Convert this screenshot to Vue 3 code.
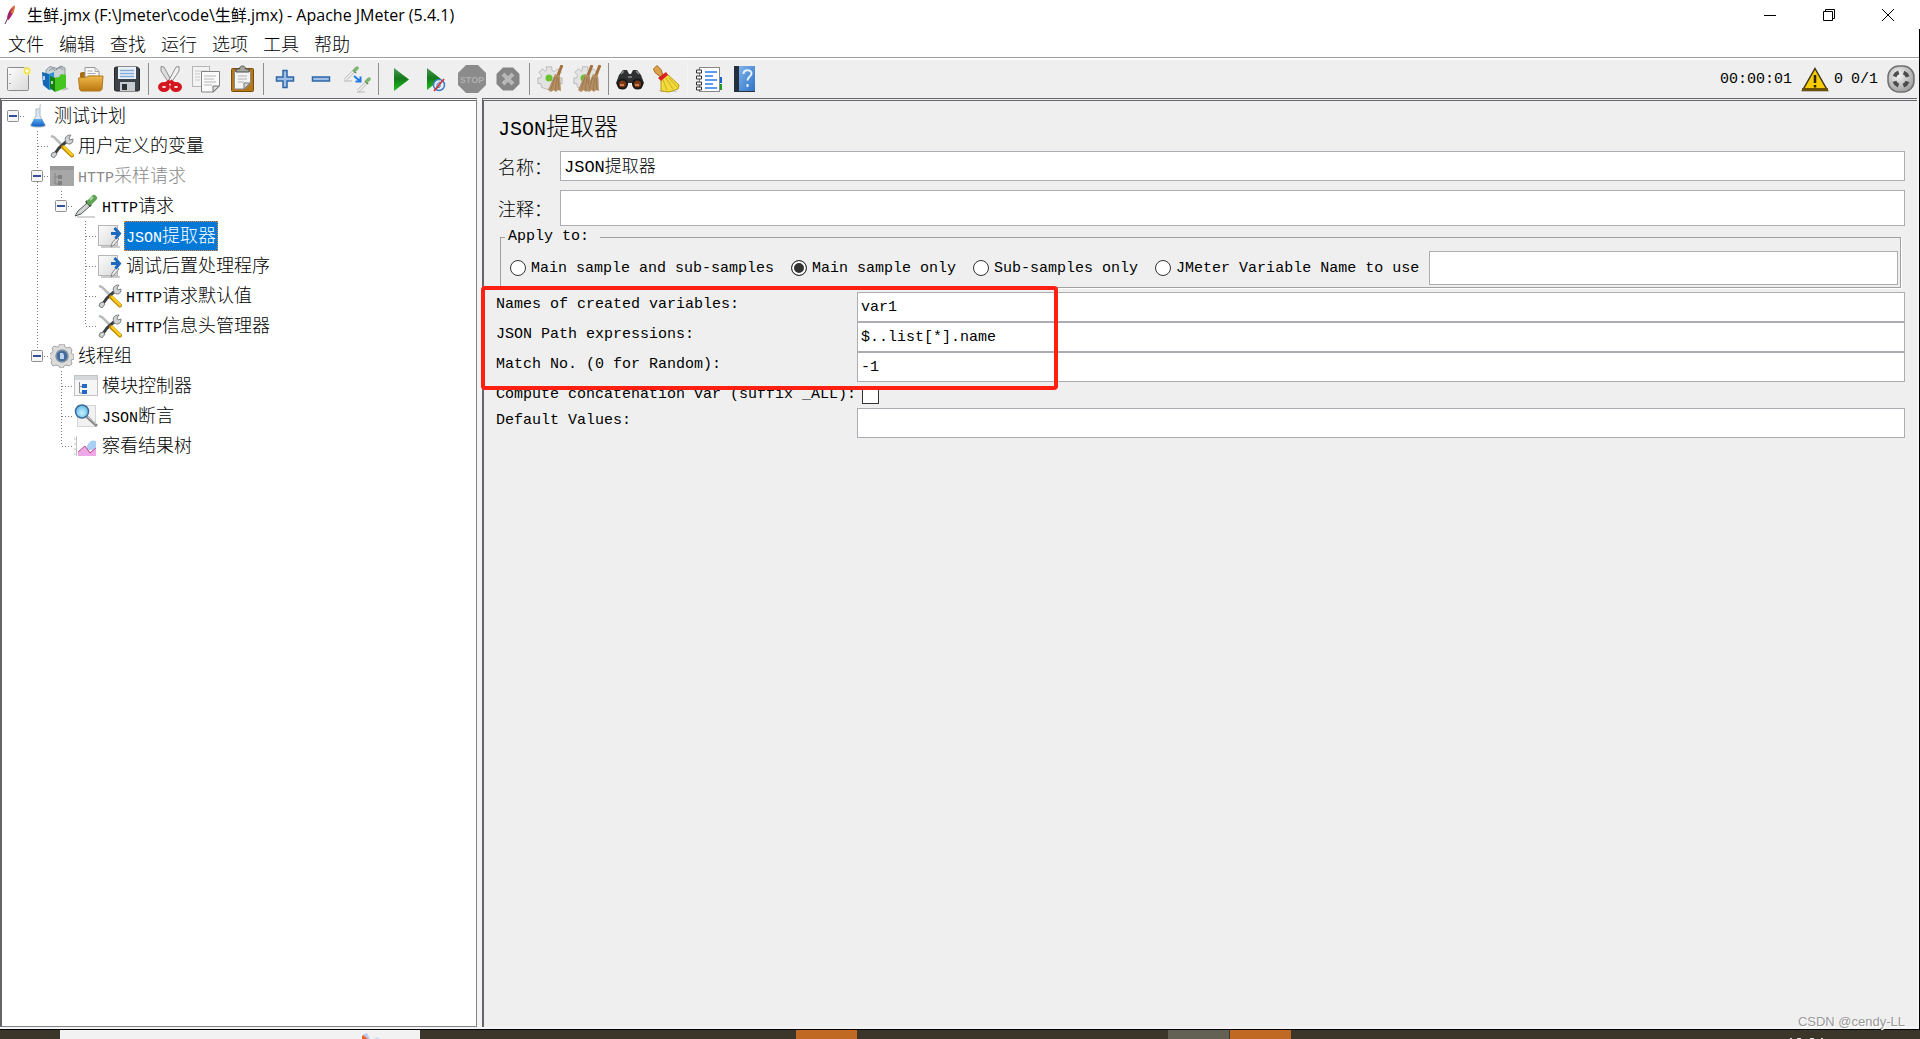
<template>
    <div class="desktop">
        <!-- shared icon shapes -->
        <svg class="sprite" aria-hidden="true">
            <defs>
                <linearGradient id="g-green" x1="0" y1="0" x2="0" y2="1">
                    <stop offset="0" stop-color="#4f9a55" /><stop offset=".45" stop-color="#147a1c" /><stop offset="1" stop-color="#1fc01b" />
                </linearGradient>
                <linearGradient id="g-folder" x1="0" y1="0" x2="0" y2="1">
                    <stop offset="0" stop-color="#f0b94a" /><stop offset="1" stop-color="#b87710" />
                </linearGradient>
                <linearGradient id="g-paper" x1="0" y1="0" x2="1" y2="1">
                    <stop offset="0" stop-color="#fdfdfd" /><stop offset="1" stop-color="#d9d9d9" />
                </linearGradient>
                <linearGradient id="g-book" x1="0" y1="0" x2="1" y2="1">
                    <stop offset="0" stop-color="#7fb2ea" /><stop offset="1" stop-color="#2f74c6" />
                </linearGradient>
                <linearGradient id="g-flask" x1="0" y1="0" x2="0" y2="1">
                    <stop offset="0" stop-color="#5da9ee" /><stop offset="1" stop-color="#0d5fc4" />
                </linearGradient>
                <radialGradient id="g-metal" cx=".4" cy=".35" r=".7">
                    <stop offset="0" stop-color="#f6f6f6" /><stop offset="1" stop-color="#9c9c9c" />
                </radialGradient>
                <radialGradient id="g-lens" cx=".5" cy=".6" r=".6">
                    <stop offset="0" stop-color="#c9f2ff" /><stop offset="1" stop-color="#5cb6e6" />
                </radialGradient>
            </defs>
            <symbol id="i-feather" viewBox="0 0 14 20">
                <path d="M1 19 3.500 13.500" stroke="#5b3566" stroke-width="1" />
                <path d="M3 14.500C3 9 6 3 10.500.500 11 4 9 10 4.500 15z" fill="#b1246b" />
                <path d="M6 6.500C7 4 8.500 1.500 10.500.500 11 3 10 6 8.500 9z" fill="#e97a20" />
                <path d="M4 12.500C5 9 7 5.500 9 3.500" stroke="#7b2a7d" fill="none" />
            </symbol>
            <symbol id="i-new" viewBox="0 0 28 28">
                <rect x="2.500" y="2.500" width="21" height="23" rx="1" fill="url(#g-paper)" stroke="#8b8b8b" />
                <path d="M5 9v1M5 18v1" stroke="#888" stroke-width="1.500" />
                <circle cx="22" cy="6" r="4.500" fill="#fbf3a6" opacity=".8" />
                <circle cx="22" cy="6" r="2.500" fill="#fffef0" stroke="#f0de4a" stroke-width="1.500" />
            </symbol>
            <symbol id="i-templates" viewBox="0 0 28 28">
                <path d="M5 5 9 1.500l7 2L20 1l4 2v10H5z" fill="#cbd2d6" stroke="#8a9499" />
                <path d="M8 6c2-3 5-3 6 0M15 5c2-3 6-3 7 0" fill="none" stroke="#7b858a" />
                <path d="M1 7 8 9v16l-6-5z" fill="#1467b4" /><path d="M8 9 13 7v17l-5 1z" fill="#2c92d8" />
                <path d="M9 11 14 13v14l-5-4z" fill="#14800f" />
                <path d="M14 13l4-1 2-3 5 1v13l-11 4z" fill="#45c51f" />
                <path d="M3 11v4M11 16v3" stroke="#eef" stroke-width="1.500" /><path d="M25 22l3 2-7 2z" fill="#bbb" />
            </symbol>
            <symbol id="i-open" viewBox="0 0 28 28">
                <path d="M3 25V8l2-1h6v5h13v13z" fill="#a96c10" />
                <path d="M8 14V2.500h10l4 4V14z" fill="#f8f8f8" stroke="#999" />
                <path d="M18 2.500v4h4M10.500 6h5M10.500 8.500h8M10.500 11h8" fill="none" stroke="#aaa" />
                <path d="M1.500 13 10 12l2-1h14l-1 13.500-2 1.500H4L2.500 24z" fill="url(#g-folder)" stroke="#b47a1c" />
            </symbol>
            <symbol id="i-save" viewBox="0 0 28 28">
                <path d="M1.500 3 2.500 2h22l2 2v21l-1 1h-23l-1-1z" fill="#3d4248" stroke="#24272b" />
                <rect x="5" y="2" width="18" height="12" fill="#e9f2fb" />
                <path d="M7 5.500h14M7 8.500h14M7 11.500h14" stroke="#86acd6" stroke-width="1.500" />
                <rect x="7" y="17" width="15" height="9" fill="#c8ccd0" /><rect x="9" y="19" width="5" height="6" fill="#2e3237" />
            </symbol>
            <symbol id="i-cut" viewBox="0 0 28 28">
                <path d="M5 1.500 8 2l8 15-3 1L5 6z" fill="#dedede" stroke="#8e8e8e" />
                <path d="M23 1.500 20 2l-8 15 3 1 8-12z" fill="#f1f1f1" stroke="#8e8e8e" />
                <path d="M14 16 10 19M14 16l4 3" stroke="#d5151d" stroke-width="4" fill="none" />
                <ellipse cx="8" cy="22" rx="4" ry="3" fill="#eee" stroke="#d5151d" stroke-width="4" />
                <ellipse cx="20" cy="22" rx="4" ry="3" fill="#eee" stroke="#d5151d" stroke-width="4" />
            </symbol>
            <symbol id="i-copy" viewBox="0 0 28 28">
                <rect x=".500" y="1.500" width="17" height="20" fill="#f3f3f3" stroke="#b5b5b5" />
                <path d="M3 6h12M3 9h5M3 12h5M3 15h5" stroke="#ccc" />
                <path d="M9.500 6.500h18V21l-6 6h-12z" fill="#fafafa" stroke="#858585" />
                <path d="M12 11h12M12 14h10M12 17h12M12 20h8" stroke="#b4b4b4" /><path d="M21 27v-6h6z" fill="#ddd" stroke="#777" />
            </symbol>
            <symbol id="i-paste" viewBox="0 0 28 28">
                <rect x="3.500" y="3.500" width="22" height="23" rx="1" fill="#b57718" stroke="#7b4d08" />
                <path d="M6.500 6.500h16v12l-6 5.500h-10z" fill="#f4f4f4" stroke="#8b8b8b" />
                <path d="M10 11h9M10 14h9M10 17h6" stroke="#b2b2b2" /><path d="M16 24v-6h6z" fill="#d6d6d6" stroke="#777" />
                <path d="M8 7V4h3.500c0-4 6-4 6 0H21v3z" fill="#a4a69f" stroke="#4f514d" />
            </symbol>
            <symbol id="i-plus" viewBox="0 0 28 28">
                <path d="M12 5.500h4V12h6.500v4H16v6.500h-4V16H5.500v-4H12z" fill="#9fc0e6" stroke="#2f66a8" stroke-width="1.500" />
            </symbol>
            <symbol id="i-minus" viewBox="0 0 28 28">
                <rect x="5.500" y="12" width="17" height="4" fill="#9fc0e6" stroke="#2f66a8" stroke-width="1.500" />
            </symbol>
            <symbol id="i-toggle" viewBox="0 0 28 28">
                <path d="M1 16h8M14 27h8" stroke="#d2d2d2" stroke-width="2" />
                <path d="M2 15 11 6M15 26 24 17" stroke="#b2b2b2" stroke-width="3" /><path d="M2 15 11 6M15 26 24 17" stroke="#f7f7f7" stroke-width="1.500" />
                <path d="M10 5l3 3M22 16l3 3" stroke="#5b7d55" stroke-width="1.500" />
                <path d="M12 5 14 3M24 16 26 14" stroke="#7cb56f" stroke-width="3.500" stroke-linecap="round" />
                <path d="M11 11l6 5M17.500 11.500v5h-5" fill="none" stroke="#1f79ea" stroke-width="2" />
            </symbol>
            <symbol id="i-play" viewBox="0 0 28 28"><path d="M8 3 23 14.500 8 26z" fill="url(#g-green)" /></symbol>
            <symbol id="i-play-now" viewBox="0 0 28 28">
                <path d="M5 3 19 14 5 25z" fill="url(#g-green)" />
                <circle cx="17" cy="20" r="5.500" fill="#e9eef8" stroke="#3f7cc4" stroke-width="1.500" />
                <path d="M15 23v-4l3-2v5z" fill="none" stroke="#3f7cc4" /><path d="M12 26 22 14" stroke="#dc2a2a" stroke-width="1.500" />
            </symbol>
            <symbol id="i-stop" viewBox="0 0 28 28"><path d="M8 0h12l8 8v12l-8 8H8l-8-8V8z" fill="#8b8b8b" /></symbol>
            <symbol id="i-shutdown" viewBox="0 0 28 28">
                <path d="M9 2.500h10l6.500 6.500v10L19 25.500H9L2.500 19V9z" fill="#858585" />
                <path d="M9 9l10 10M19 9 9 19" stroke="#b8b8b8" stroke-width="4" />
            </symbol>
            <symbol id="i-gear" viewBox="0 0 28 28">
                <path d="M10 2h6v4l3 1 3-3 4 4-3 3 1 3h3v6h-3l-2 4-4 2h-8l-5-2-1-4H1v-6h3l1-3-3-3 4-4 3 3 1-1z" fill="#e3e3e3" stroke="#b5b5b5" />
            </symbol>
            <symbol id="i-broom-s" viewBox="0 0 16 28">
                <path d="M15 0 10 13" stroke="#a5713b" stroke-width="3" />
                <path d="M8 9l5 2 1 15-3-1-2 2-2-2-3 2-3-2C3 21 5 15 8 9z" fill="#b58f64" />
                <path d="M8 12 4 24M10 12l-2 14M11 13l1 12" stroke="#9b784f" fill="none" />
            </symbol>
            <symbol id="i-clear" viewBox="0 0 28 28">
                <use href="#i-gear" x="0" width="26" height="26" /><circle cx="12" cy="13" r="3.500" fill="#67c32e" />
                <use href="#i-broom-s" x="10" y="0" width="16" height="28" />
            </symbol>
            <symbol id="i-clear-all" viewBox="0 0 28 28">
                <use href="#i-gear" width="26" height="26" /><circle cx="11" cy="13" r="3.500" fill="#67c32e" />
                <use href="#i-broom-s" x="4" y="0" width="16" height="28" /><use href="#i-broom-s" x="12" y="0" width="16" height="28" />
            </symbol>
            <symbol id="i-search" viewBox="0 0 28 28">
                <path d="M3 10 7 5h4l2 4h2l2-4h4l4 5 3 8-3 6h-6l-3-6h-4l-3 6H3l-3-6z" fill="#2f3031" />
                <path d="M5 9 8 6M20 6l3 3M12 12h4" stroke="#8a8a8a" stroke-width="1.500" />
                <circle cx="6.500" cy="19" r="4.500" fill="#7b3a16" stroke="#191919" stroke-width="2" /><circle cx="21.500" cy="19" r="4.500" fill="#7b3a16" stroke="#191919" stroke-width="2" />
                <path d="M4 20h4M19 20h4" stroke="#cf8050" stroke-width="2" />
            </symbol>
            <symbol id="i-reset" viewBox="0 0 28 28">
                <path d="M6 25h16l4 2H9z" fill="#ccc" />
                <path d="M1.500 4 5 .500l4 4 2 6-3 1-5-4z" fill="#dca24a" stroke="#a56b1d" />
                <path d="M9 13 15 9l12 11-1 4-9 3-8-1z" fill="#f1db3c" stroke="#b89a16" />
                <path d="M11 15l4 10M14 13l7 11M17 13l8 9" stroke="#cfae20" fill="none" />
                <path d="M6 13 14 7l2 3-7 6z" fill="#d92222" />
            </symbol>
            <symbol id="i-function" viewBox="0 0 28 28">
                <path d="M24 12h3v6h-3z" fill="#1263d8" /><path d="M24 19h3v6h-3z" fill="#1c9a22" />
                <rect x="4.500" y="2.500" width="20" height="24" fill="#fff" stroke="#888" />
                <path d="M10 7h12M10 11h8M10 15h12M10 19h8M10 23h12" stroke="#2a7cf0" stroke-width="1.500" />
                <path d="M1.500 5h5v3h-5zM1.500 11h5v3h-5zM1.500 17h5v3h-5zM1.500 22h5v3h-5z" fill="#fff" stroke="#333" />
            </symbol>
            <symbol id="i-help" viewBox="0 0 28 28">
                <rect x="3" y="1" width="21" height="26" fill="#26303c" /><rect x="8" y="1" width="16" height="25" fill="url(#g-book)" />
                <path d="M12.500 9c0-5 8-5 8-.500 0 3-4 3-4 7M16.500 19v3" fill="none" stroke="#e6f3ff" stroke-width="2" />
            </symbol>
            <symbol id="i-warning" viewBox="0 0 28 28">
                <path d="M14 3.500 26.500 25.500H1.500z" fill="#f7cb07" stroke="#3d3516" stroke-width="1.500" /><path d="M1 24.500h26" stroke="#6c5200" stroke-width="3" />
                <path d="M14 10v8M14 20v2.500" stroke="#2b2500" stroke-width="2.500" />
            </symbol>
            <symbol id="i-status" viewBox="0 0 28 28">
                <rect x="1" y="1" width="26" height="26" rx="11" fill="url(#g-metal)" stroke="#707070" stroke-width="1.500" />
                <circle cx="14" cy="14" r="7" fill="none" stroke="#4c4c4c" stroke-width="4" stroke-dasharray="6 4.995" stroke-dashoffset="-2.500" />
            </symbol>
            <symbol id="i-flask" viewBox="0 0 24 24">
                <ellipse cx="12" cy="21.500" rx="8" ry="2" fill="#bbb" />
                <path d="M10 5h4v7l5 9c0 2-14 2-14 0l5-9z" fill="#dbe9f5" stroke="#a9b8c5" />
                <path d="M8 15h8l3 6c0 2-14 2-14 0z" fill="url(#g-flask)" /><path d="M14.500 0 13 9" stroke="#c8d0d6" stroke-width="1.500" />
            </symbol>
            <symbol id="i-tools" viewBox="0 0 24 24">
                <path d="M1 2l3 1 8 8" fill="none" stroke="#b9bcbd" stroke-width="2.500" />
                <path d="M4 21 9 14 17 7" fill="none" stroke="#3e4142" stroke-width="3" />
                <path d="M1 22l1-3 3-1 2 2-3 4zM16 8c-2-4 0-7 5-7l-2 3 1 2 3-1c0 5-3 6-7 4z" fill="#d0d2d3" stroke="#7d8081" />
                <path d="M13 13 22 21.500" stroke="#b98303" stroke-width="4" stroke-linecap="round" /><path d="M14 13 22 21" stroke="#fac91c" stroke-width="2.500" stroke-linecap="round" />
            </symbol>
            <symbol id="i-ctrl-off" viewBox="0 0 24 24">
                <path d="M0 2h24v20H0z" fill="#a7a7a7" /><path d="M0 2h24v4H0z" fill="#989898" />
                <path d="M5 9v11h5M5 13h4" fill="none" stroke="#858585" /><path d="M8 11h4v4H8zM8 17h4v4H8z" fill="#808080" />
            </symbol>
            <symbol id="i-pipette" viewBox="0 0 24 24">
                <path d="M3 23h18" stroke="#d4d4d4" stroke-width="2" />
                <path d="M1 22 4 17l9-8 3 3-9 8z" fill="#d3d5d5" stroke="#555959" />
                <path d="M12 7l5 5" stroke="#36513a" stroke-width="2.500" />
                <path d="M16 8l4-4" stroke="#5ea454" stroke-width="6" stroke-linecap="round" /><path d="M16 6l3-3" stroke="#a8d89d" stroke-width="2" />
            </symbol>
            <symbol id="i-post" viewBox="0 0 24 24">
                <path d="M3 23h19" stroke="#ccc" stroke-width="2" /><rect x=".500" y="1.500" width="19" height="20" fill="url(#g-paper)" stroke="#b5b5b5" />
                <path d="M13 23l1-4 5-6 2 2-5 6z" fill="#eee" stroke="#888" />
                <path d="M13 9.500h9M16.500 4l5 5.500-4 5" fill="none" stroke="#1e69bd" stroke-width="3" />
            </symbol>
            <symbol id="i-thread" viewBox="0 0 24 24">
                <path d="M10 0h4l1 3 2 1 3-1 2 3-1 3 3 2v4l-3 1 1 4-3 2-3-1-2 1-1 2h-3l-1-2-3-1-3 1-2-3 1-3-1-1-2-2v-3l3-1 1-2-1-3 2-2 3 1 2-1z" fill="#dcdcdc" stroke="#a5a5a5" />
                <circle cx="12" cy="12" r="6" fill="#426b9f" stroke="#84919f" stroke-width="1.500" /><path d="M10 9h3l1 2v4h-4z" fill="#bdd3ea" />
            </symbol>
            <symbol id="i-module" viewBox="0 0 24 24">
                <rect x=".500" y="1.500" width="23" height="20" fill="#f5f5f5" stroke="#c3c3c3" /><path d="M1 2h22v4H1z" fill="#d5d8da" />
                <path d="M5.500 8v11h4M5.500 12.500h4" fill="none" stroke="#8d8d8d" /><path d="M8 10h5v4H8zM8 16h5v4H8z" fill="#2268c4" />
            </symbol>
            <symbol id="i-assert" viewBox="0 0 24 24">
                <rect x="3.500" y="1.500" width="18" height="21" fill="#f1f1f1" stroke="#d4d4d4" />
                <path d="M13 13l10 9" stroke="#888" stroke-width="3" /><path d="M14 13l8 7" stroke="#d2d2d2" />
                <circle cx="8" cy="7.500" r="6.500" fill="url(#g-lens)" stroke="#3b6b98" stroke-width="1.500" />
            </symbol>
            <symbol id="i-results" viewBox="0 0 24 24">
                <path d="M2.500 2v20M0 5h2M0 10h2M0 15h2M0 20h2" stroke="#c2c2c2" />
                <path d="M13 12c3-6 6-6 9-5v9H13z" fill="#a9cff5" />
                <path d="M4 22v-4l7-6 5 6 6-4v8z" fill="#eda8e8" /><path d="M4 18l7-6 5 7 6-5" fill="none" stroke="#c94b83" />
            </symbol>
        </svg>

        <div class="window">
            <header class="title-bar">
                <svg class="feather"><use href="#i-feather" /></svg>
                <span class="title">生鲜.jmx (F:\Jmeter\code\生鲜.jmx) - Apache JMeter (5.4.1)</span>
                <button class="win-btn" aria-label="最小化"><svg viewBox="0 0 12 12"><path d="M0 6.500h12" /></svg></button>
                <button class="win-btn" aria-label="还原"><svg viewBox="0 0 12 12"><path d="M.500 2.500h9v9h-9zM2.500 2V.500h9v9H10" /></svg></button>
                <button class="win-btn" aria-label="关闭"><svg viewBox="0 0 12 12"><path d="M0 0l12 12M12 0 0 12" /></svg></button>
            </header>

            <div class="frame">
                <nav class="menu-bar">
                    <button v-for="m in menus" :key="m">{{ m }}</button>
                </nav>

                <div class="tool-bar">
                    <div class="tool-group" v-for="(group, gi) in tools" :key="gi">
                        <button v-for="t in group" :key="t.icon" :aria-label="t.label">
                            <svg>
                                <use :href="'#i-' + t.icon" />
                                <text v-if="t.text" class="icon-text" x="14" y="18" text-anchor="middle">{{ t.text }}</text>
                            </svg>
                        </button>
                    </div>
                    <div class="status">
                        <span class="timer">00:00:01</span>
                        <svg><use href="#i-warning" /></svg>
                        <span class="errors">0</span>
                        <span class="threads">0/1</span>
                        <svg><use href="#i-status" /></svg>
                    </div>
                </div>

                <div class="panes">
                    <aside class="tree-pane">
                        <ul class="tree">
                            <li v-for="n in nodes" :key="n.label">
                                <svg v-for="(g, i) in n.guides" :key="i" class="guide" viewBox="0 0 24 30">
                                    <path class="dots" :d="guidePath[g]" />
                                    <g v-if="n.open && i === n.guides.length - 1">
                                        <path class="dots" d="M18 15.500h6" />
                                        <rect x="5.500" y="9.500" width="11" height="11" rx="1" fill="#f7f7f7" stroke="#8f8f8f" />
                                        <path d="M7 15h8" stroke="#33509f" stroke-width="2" />
                                    </g>
                                </svg>
                                <svg class="node-icon"><use :href="'#i-' + n.icon" /></svg>
                                <span class="node-label" :class="{ selected: n.label === current, off: n.off }"><span
                                    class="latin" v-if="n.latin">{{ n.latin }}</span>{{ n.label.slice(n.latin ? n.latin.length : 0) }}</span>
                            </li>
                        </ul>
                    </aside>

                    <main class="editor">
                        <h1><span class="latin">JSON</span>提取器</h1>
                        <div class="field">
                            <label for="name">名称：</label>
                            <input id="name" class="cjk-input" type="text" v-model="form.name">
                        </div>
                        <div class="field tall">
                            <label for="comment">注释：</label>
                            <input id="comment" class="cjk-input" type="text" v-model="form.comment">
                        </div>

                        <fieldset>
                            <legend>Apply to:</legend>
                            <div class="scope">
                                <label v-for="s in scopes" :key="s">
                                    <input type="radio" name="scope" :value="s" v-model="form.scope">{{ s }}
                                </label>
                                <input type="text" aria-label="JMeter Variable Name" v-model="form.scopeVariable">
                            </div>
                        </fieldset>

                        <div class="params">
                            <div class="param" v-for="p in params" :key="p.id">
                                <label :for="p.id">{{ p.label }}</label>
                                <input :id="p.id" type="text" v-model="form[p.id]">
                            </div>
                            <div class="param compact">
                                <label for="concat">Compute concatenation var (suffix _ALL):</label>
                                <input id="concat" type="checkbox" v-model="form.concat">
                            </div>
                            <div class="param">
                                <label for="defaults">Default Values:</label>
                                <input id="defaults" type="text" v-model="form.defaults">
                            </div>
                            <div class="highlight"></div>
                        </div>
                        <span class="watermark">CSDN @cendy-LL</span>
                    </main>
                </div>
            </div>
        </div>

        <footer class="task-bar">
            <div class="task-search">
                <svg viewBox="0 0 24 9"><path d="M1 9V6l3-2 4 5z" fill="#e9622a" /><path d="M2 5l4-2 3 6H7z" fill="#b9cdf3" /><path d="M13 9l3-2 3 2z" fill="#c7dcf5" /></svg>
            </div>
            <div class="task orange first"></div>
            <div class="task grey"></div>
            <div class="task orange"></div>
            <svg class="clock" viewBox="0 0 40 9"><path d="M2 8.500h2M9 8.500h4M22 8.500h4M33 8.500h2" stroke="#ddd" /></svg>
        </footer>
    </div>
</template>

<script setup>
import { reactive, ref } from 'vue'

const menus = ['文件', '编辑', '查找', '运行', '选项', '工具', '帮助']

const tools = [
    [
        { icon: 'new', label: '新建' },
        { icon: 'templates', label: '模板' },
        { icon: 'open', label: '打开' },
        { icon: 'save', label: '保存' },
    ],
    [
        { icon: 'cut', label: '剪切' },
        { icon: 'copy', label: '复制' },
        { icon: 'paste', label: '粘贴' },
    ],
    [
        { icon: 'plus', label: '展开' },
        { icon: 'minus', label: '折叠' },
        { icon: 'toggle', label: '切换' },
    ],
    [
        { icon: 'play', label: '启动' },
        { icon: 'play-now', label: '不停顿开始' },
        { icon: 'stop', label: '停止', text: 'STOP' },
        { icon: 'shutdown', label: '关闭' },
    ],
    [
        { icon: 'clear', label: '清除' },
        { icon: 'clear-all', label: '清除全部' },
    ],
    [
        { icon: 'search', label: '查找' },
        { icon: 'reset', label: '重置搜索' },
    ],
    [
        { icon: 'function', label: '函数助手' },
        { icon: 'help', label: '帮助' },
    ],
]

// one cell per level: blank, line, tee, end
const guidePath = {
    b: '',
    l: 'M11.5 0v30',
    t: 'M11.5 0v30M12 15.5h12',
    e: 'M11.5 0v15M12 15.5h12',
}

const nodes = [
    { label: '测试计划', icon: 'flask', guides: 'b', open: true },
    { label: '用户定义的变量', icon: 'tools', guides: 'bt' },
    { label: 'HTTP采样请求', latin: 'HTTP', icon: 'ctrl-off', guides: 'bt', open: true, off: true },
    { label: 'HTTP请求', latin: 'HTTP', icon: 'pipette', guides: 'ble', open: true },
    { label: 'JSON提取器', latin: 'JSON', icon: 'post', guides: 'blbt' },
    { label: '调试后置处理程序', icon: 'post', guides: 'blbt' },
    { label: 'HTTP请求默认值', latin: 'HTTP', icon: 'tools', guides: 'blbt' },
    { label: 'HTTP信息头管理器', latin: 'HTTP', icon: 'tools', guides: 'blbe' },
    { label: '线程组', icon: 'thread', guides: 'be', open: true },
    { label: '模块控制器', icon: 'module', guides: 'bbt' },
    { label: 'JSON断言', latin: 'JSON', icon: 'assert', guides: 'bbt' },
    { label: '察看结果树', icon: 'results', guides: 'bbe' },
]
const current = ref('JSON提取器')

const scopes = ['Main sample and sub-samples', 'Main sample only', 'Sub-samples only', 'JMeter Variable Name to use']

const params = [
    { id: 'variables', label: 'Names of created variables:' },
    { id: 'paths', label: 'JSON Path expressions:' },
    { id: 'matchNo', label: 'Match No. (0 for Random):' },
]

const form = reactive({
    name: 'JSON提取器',
    comment: '',
    scope: 'Main sample only',
    scopeVariable: '',
    variables: 'var1',
    paths: '$..list[*].name',
    matchNo: '-1',
    concat: false,
    defaults: '',
})
</script>

<style>
body {margin: 0; overflow: hidden;}
</style>

<style scoped>
.desktop {
    display: flex; flex-direction: column; height: 100vh; color: #000; background-color: #fff;
    font-family: "Liberation Mono", "Noto Sans CJK SC", monospace; font-size: 15px;
}
.sprite {position: absolute; width: 0; height: 0;}
button {border: 0; padding: 0; background: none; color: inherit; font: inherit;}
svg {display: block;}

.window {flex: 1; min-height: 0; display: flex; flex-direction: column; border-bottom: 1px solid #000;}
.title-bar {display: flex; align-items: center; height: 29px; padding: 0 3px 0 4px;}
.feather {width: 14px; height: 20px;}
.title {flex: 1; padding-left: 9px; font-family: "Open Sans", "Noto Sans CJK SC", sans-serif; font-size: 16px; line-height: 24px;}
.win-btn {display: flex; justify-content: center; width: 59px;}
.win-btn svg {width: 12px; height: 12px; fill: none; stroke: #000; stroke-width: 1;}

.frame {flex: 1; min-height: 0; display: flex; flex-direction: column; border-right: 1px solid #000;}
.menu-bar {display: flex; gap: 15px; height: 28px; padding-left: 8px; border-bottom: 1px solid #a0a0a0;}
.menu-bar button {font-family: "Noto Sans CJK SC", sans-serif; font-size: 18px; line-height: 26px; font-weight: 300;}

.tool-bar {display: flex; align-items: center; height: 38px; padding-left: 1px; border-top: 2px solid #fff; background-color: #efefef;}
.tool-group {display: flex;}
.tool-group + .tool-group {margin-left: 3px; padding-left: 3px; border-left: 1px solid #8e8e8e;}
.tool-group:nth-child(7) {border-left-color: #f5f5f5;}
.tool-group button {display: flex; justify-content: center; align-items: center; width: 36px; height: 32px;}
.tool-bar svg {width: 28px; height: 28px;}
.icon-text {font-family: "Liberation Sans", sans-serif; font-size: 9px; font-weight: bold; fill: #b0b0b0;}
.status {display: flex; align-items: center; margin-left: auto; padding-right: 4px;}
.timer, .threads {margin-right: 9px;}
.errors {margin: 0 8px 0 5px;}

.panes {flex: 1; min-height: 0; display: flex; gap: 5px; padding: 0 2px 2px 0; background-color: #f4f4f4;}
.tree-pane {
    flex: 0 1 477px; box-sizing: border-box; background-color: #fff;
    border: 1px solid #828287; border-top: 3px double #65656a; border-left: 2px solid #65656a;
}
.tree {list-style: none; margin: 0; padding: 0;}
.tree li {display: flex; align-items: center; height: 30px;}
.guide {flex: none; width: 24px; height: 30px;}
.dots {fill: none; stroke: #7d7d7d; stroke-dasharray: 1 2;}
.node-icon {flex: none; width: 24px; height: 24px;}
.node-label {
    margin-left: 2px; padding: 0 1px 4px; font-family: "Noto Sans CJK SC", sans-serif; font-size: 18px; font-weight: 300;
    line-height: 24px; white-space: nowrap; border: 1px solid transparent;
}
.latin {font-family: "Liberation Mono", monospace; font-size: 15px; line-height: 1;}
.node-label.off {color: #8a8a8a;}
.node-label.selected {color: #fff; background-color: #0078d7; border: 1px dotted #ff8728;}

.editor {
    flex: 1; min-width: 0; position: relative; padding: 4px 12px 0; background-color: #efefef;
    border-top: 3px double #65656a; border-left: 2px solid #65656a;
}
h1 {margin: 0 0 6px 2px; font-family: "Noto Sans CJK SC", sans-serif; font-size: 24px; font-weight: 300; line-height: 40px;}
h1 .latin {font-size: 20px;}
input[type=text] {
    box-sizing: border-box; min-width: 0; height: 30px; padding: 0 3px; border: 1px solid #abadb3; border-radius: 0;
    background-color: #fff; color: #000; font: inherit; outline: none;
}
.field {display: flex; align-items: center; margin-bottom: 9px;}
.field label {width: 64px; padding-left: 2px; box-sizing: border-box; font-family: "Noto Sans CJK SC", sans-serif; font-size: 18px; font-weight: 300; line-height: 28px;}
.field input {flex: 1;}
.field input.cjk-input {padding-bottom: 4px; font-size: 17px; font-weight: 300;}
.field.tall {margin-bottom: 0;}
.field.tall input {height: 36px;}

fieldset {margin: 0 4px 4px; padding: 0 2px 2px 9px; min-width: 0; border: 1px solid #a0a0a0; box-shadow: 1px 1px 0 #fff;}
legend {margin-left: -5px; padding: 0 11px 0 3px; line-height: 22px;}
.scope {display: flex; align-items: center; padding-top: 3px;}
.scope label {display: flex; align-items: center; margin-right: 17px; white-space: nowrap;}
.scope label:last-of-type {margin-right: 10px;}
.scope input[type=radio] {
    appearance: none; box-sizing: border-box; width: 16px; height: 16px; margin: 0 5px 0 0; border: 1px solid #333;
    border-radius: 50%; background-color: #fff;
}
.scope input[type=radio]:checked {background-color: #333; box-shadow: inset 0 0 0 2px #fff;}
.scope input[type=text] {flex: 1; height: 34px;}

.params {position: relative;}
.param {display: flex; align-items: flex-start; min-height: 30px;}
.param label {width: 361px; line-height: 26px; white-space: nowrap;}
.param input[type=text] {flex: 1;}
.param.compact {min-height: 26px;}
.param input[type=checkbox] {
    appearance: none; box-sizing: border-box; width: 17px; height: 17px; margin: 5px 0 0 5px; border: 1px solid #333;
    background-color: #fff;
}
.highlight {
    position: absolute; top: -6px; left: -15px; width: 577px; height: 104px; box-sizing: border-box;
    border: 4px solid #ff2012; border-radius: 4px; pointer-events: none;
}
.watermark {
    position: absolute; right: 12px; bottom: -4px; color: #999; font-family: "Liberation Sans", sans-serif;
    font-size: 13px; line-height: 18px; text-shadow: 1px 1px 0 #fff;
}

.task-bar {display: flex; height: 9px; padding: 0 92px 0 60px; overflow: hidden; background-color: #3b352a;}
.task-search {width: 360px; background-color: #f2f2f2;}
.task-search svg {width: 24px; height: 9px; margin-left: 301px;}
.task {width: 61px;}
.task.first {margin: 0 311px 0 376px;}
.task.grey {margin-right: 1px; background-color: #636054;}
.task.orange {background-color: #bf6923;}
.clock {width: 40px; height: 9px; margin-left: auto;}
</style>
